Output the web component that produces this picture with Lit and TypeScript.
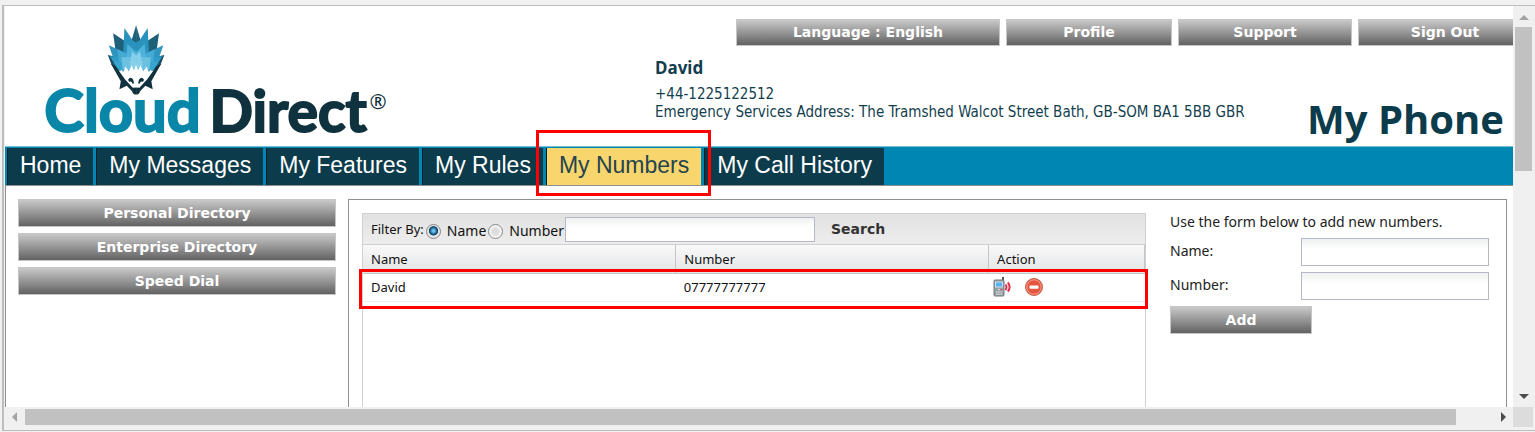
import { LitElement, html, svg, css } from "lit";
import { customElement, property, state } from "lit/decorators.js";

const FACE = "#10323f";

@customElement("brand-logo")
class BrandLogo extends LitElement {
  static styles = css`
    :host { display: block; }
    svg { display: block; width: 343px; height: 113px; overflow: visible; }
    .word { font: 700 172px Lato, "Open Sans", sans-serif; stroke-width: 6; }
    .cloud { fill: #0a86a8; stroke: #0a86a8; font-size: 180px; }
    .direct { fill: #10323f; stroke: #10323f; }
    .mark { font: 400 62px "Noto Sans", sans-serif; fill: #10323f; }
  `;
  render() {
    const spikes = (side: string) => svg`
      <g transform=${side}>
        <path fill="#1d6078" d="M0 0 L-15 50 L-10 90 L0 90 Z"/>
        <path fill="#1d6078" d="M-69 24 L-60 90 L-20 110 L-36 46 Z"/>
        <path fill="#17495c" d="M-85 89 L-72 122 L-40 140 L-40 100 Z"/>
        <path fill="#1d6078" d="M-75 115 L-52 136 L-30 140 L-50 112 Z"/>
        <path fill="#2a93bd" d="M-35 8 L-39 90 L0 120 L0 52 L-10 46 Z"/>
        <path fill="#2f94bf" d="M-82 60 L-64 112 L-20 140 L-30 84 Z"/>
        <path fill="#2d9cc6" d="M-80 92 L-56 130 L-10 145 L-34 100 Z"/>
        <path fill="#43acd4" d="M-56 72 L-50 124 L-10 140 L-14 92 Z"/>
        <path fill="#4fb2da" d="M-26 56 L-30 110 L0 136 L0 80 Z"/>
        <path fill="#3aa6d0" d="M-68 108 L-50 136 L-20 140 L-30 112 Z"/>
        <path fill="#6cc1e3" d="M-44 96 L-40 134 L0 136 L-14 96 Z"/>
        <path fill="#86cfeb" d="M-12 78 L-20 120 L0 134 L0 90 Z"/>
        <path fill="#ffffff" d="M-54 144 L-44 134 L-38 142 L-32 124 L-22 138 L-13 120 L-6 136 L0 118 L0 198 L-18 182 L-44 158 Z"/>
        <path fill=${FACE} d="M-76 115 L-62 122 L-33 163 L-10 188 L0 187 L0 208 Q-9 209 -12 198 L-28 182 L-50 192 L-46 168 Z"/>
        <path fill=${FACE} d="M-24 164 Q-17 152 -9 163 L-6 174 L-11 176 Q-13 166 -21 170 Z"/>
      </g>`;
    return html`
      <svg viewBox="135 72 1030 340" role="img" aria-label="Cloud Direct">
        ${spikes("translate(408 76)")}
        ${spikes("translate(408 76) scale(-1 1)")}
        <text class="word cloud" x="132" y="397">Cloud</text>
        <text class="word direct" x="629" y="397">Direct</text>
        <text class="mark" x="1110" y="329">®</text>
      </svg>`;
  }
}

@customElement("scroll-track")
class ScrollTrack extends LitElement {
  @property({ reflect: true }) direction = "vertical";
  static styles = css`
    :host { display: flex; background: #f0f0f0; }
    :host([direction="vertical"]) { flex-direction: column; }
    .arrow { display: flex; align-items: center; justify-content: center; flex: none; }
    :host([direction="vertical"]) .arrow { height: 21px; }
    :host([direction="horizontal"]) .arrow { width: 20px; }
    .thumb { background: #c1c1c1; }
    :host([direction="vertical"]) .thumb { height: 36%; margin: 0 3px 0 2px; }
    :host([direction="horizontal"]) .thumb { flex: 39; margin: 2px 0; }
    .rest { flex: 1; }
    svg { width: 10px; height: 10px; display: block; }
  `;
  render() {
    const v = this.direction === "vertical";
    return html`
      <div class="arrow"><svg viewBox="0 0 10 10"><path fill="#a3a3a3" d=${v ? "M0 8 L5 3 L10 8Z" : "M7 0 L2 5 L7 10Z"} /></svg></div>
      <div class="thumb"></div>
      <div class="rest"></div>
      <div class="arrow"><svg viewBox="0 0 10 10"><path fill="#4c4c4c" d=${v ? "M0 2 L5 7 L10 2Z" : "M3 0 L8 5 L3 10Z"} /></svg></div>`;
  }
}

@customElement("app-root")
class AppRoot extends LitElement {
  @state() private filter = "name";

  private tools = [
    { label: "Language : English", size: "wide" },
    { label: "Profile", size: "narrow" },
    { label: "Support", size: "" },
    { label: "Sign Out", size: "" },
  ];
  private tabs = ["Home", "My Messages", "My Features", "My Rules", "My Numbers", "My Call History"];
  private directories = ["Personal Directory", "Enterprise Directory", "Speed Dial"];
  private contacts = [{ name: "David", number: "07777777777" }];

  static styles = css`
    :host { display: block; font: 13px/20px "Noto Sans", sans-serif; color: #222; }
    * { box-sizing: border-box; }
    .window { height: 100vh; display: flex; flex-direction: column; background: #f1f1f1; padding: 5px 0 1px 2px; overflow: hidden; }
    .frame { flex: 1; min-height: 0; display: grid; grid-template: minmax(0, 1fr) 20px / minmax(0, 1fr) 22px; border: solid #bdbdbd; border-width: 1px 0 1px 2px; padding: 0 0 3px 1px; }
    .corner { background: #dcdcdc; margin-right: 2px; }
    .page { background: #fff; overflow: hidden; display: flex; flex-direction: column; }

    .header { display: flex; justify-content: space-between; height: 140px; flex: none; }
    .logo { margin: 18px 0 0 40px; }
    .side { width: 858px; display: flex; flex-direction: column; }
    .tools { display: flex; justify-content: flex-end; gap: 6px; margin: 13px -19px 0 0; }
    .pill { height: 28px; border: 1px solid #c6c6c6; background: linear-gradient(#c9c9c9, #626262); color: #fff; font: 700 14px/26px "DejaVu Sans", Verdana, sans-serif; padding: 0; cursor: pointer; display: block; text-align: center; text-decoration: none; }
    .tools .pill { width: 174px; height: 27px; flex: none; line-height: 25px; }
    .tools .wide { width: 264px; }
    .tools .narrow { width: 166px; }
    .account { display: flex; justify-content: space-between; color: #123e4e; }
    .who { font: 15px/18px "DejaVu Sans Condensed", "Noto Sans", sans-serif; }
    .who h2 { margin: 12px 0 7px; font: 700 17px/20px "Noto Sans", sans-serif; }
    .who p { margin: 0; }
    h1 { margin: 45px 9px 0 0; font: 700 40px/56px "Open Sans", "Noto Sans", sans-serif; color: #0c3b4b; white-space: nowrap; }

    .nav { display: flex; gap: 3px; flex: none; height: 40px; background: #0086b2; border-top: 1px solid #6fbfd8; border-bottom: 1px solid #8f8f8f; padding: 1px 0 0 2px; }
    .tab { border-left: 1px solid #04202b; background: #0c3b4b; color: #fff; font: 23px/34px "Liberation Sans", sans-serif; padding: 0 12px; text-decoration: none; white-space: nowrap; position: relative; }
    .tab.active { background: #f9d56e; color: #24454e; }
    .tab.active::after { content: ""; position: absolute; inset: -18px -10px -11px -11px; border: 3px solid #f00; z-index: 1; }

    .body { flex: 1; min-height: 0; display: flex; align-items: stretch; padding: 13px 6px 0 12px; border-left: 1px solid #8f8f8f; }
    .menu { width: 318px; flex: none; display: flex; flex-direction: column; gap: 6px; margin-right: 12px; }
    .panel { flex: 1; min-width: 0; border: solid #909090; border-width: 1px 1px 0 1px; display: flex; padding: 13px 17px 0 13px; }

    .grid { flex: 1; min-width: 0; border: 1px solid #d0d0d0; border-bottom: 0; font: 13px/18px "Noto Sans", sans-serif; color: #111; }
    .filter { display: flex; align-items: center; height: 31px; background: linear-gradient(#e2e2e2, #ededed); border-bottom: 1px solid #d0d0d0; padding-left: 8px; }
    .filter label { display: flex; align-items: center; gap: 6px; font-size: 14px; padding-top: 4px; }
    .filter input[type="radio"] { appearance: none; width: 15px; height: 15px; margin: 0 0 0 2px; border: 1px solid #868686; border-radius: 50%; background: radial-gradient(circle, #ddd 30%, #fafafa 70%); }
    .filter input[type="radio"]:checked { background: radial-gradient(circle at 50% 45%, #6fc4ee 0 10%, #12547f 38%, #12405f 44%, #e6e6e6 52%); }
    .text { border: 1px solid #b5b8c8; background: linear-gradient(#eef1f1, #fff 40%); padding: 0 4px; font: inherit; min-width: 0; }
    .filter .text { width: 250px; height: 25px; margin-left: 1px; }
    .search { border: 0; background: none; color: #333; padding: 0; margin-left: 16px; font: 700 14px/20px "DejaVu Sans", Verdana, sans-serif; }
    table { width: 100%; border-collapse: collapse; table-layout: fixed; }
    th, td { text-align: left; padding: 0 8px; font-weight: 400; }
    th { width: 40%; height: 28px; background: linear-gradient(#f9f9f9, #e3e4e6); border: solid #c5c5c5; border-width: 0 1px 1px 0; }
    th.act { width: 20%; }
    td { height: 28px; border-bottom: 1px solid #ededed; }
    tbody tr { position: relative; }
    tbody tr::after { content: ""; position: absolute; inset: -4px -3px -8px -4px; border: 3px solid #f00; pointer-events: none; }
    .actions { display: flex; gap: 12px; padding-left: 3px; margin-left: -8px; }
    .icon { border: 0; background: none; padding: 0; width: 20px; height: 20px; }
    .icon svg { display: block; width: 20px; height: 20px; }

    form { width: 319px; flex: none; margin-left: 24px; font: 14px/18px "Noto Sans", sans-serif; }
    form p { margin: 0 0 7px; }
    .field { display: flex; justify-content: space-between; height: 28px; margin-bottom: 6px; }
    .field label { line-height: 26px; }
    .field .text { width: 188px; }
    form .pill { width: 142px; }
  `;

  private handset() {
    return html`<svg viewBox="0 0 20 20">
      <rect x="10" y="0" width="2" height="7" fill="#555"/>
      <rect x="2" y="3" width="10" height="16" rx="1" fill="#9aa1a8" stroke="#70767d"/>
      <rect x="3.500" y="5" width="7" height="5" fill="#58b3f5" stroke="#eaf5ff" stroke-width=".7"/>
      <path d="M4 12.500h1.600M6.200 12.500h1.600M4 15h1.600M6.200 15h1.600M8.500 15h1.600M4 17.300h1.600M6.200 17.300h1.600M8.500 17.300h1.600" stroke="#e8e8e8" stroke-width="1.100"/>
      <path d="M4 12.500h1.600" stroke="#55b35a" stroke-width="1.200"/><path d="M8.500 12.500h1.600" stroke="#e8485c" stroke-width="1.200"/>
      <path d="M13.500 7.500Q15.500 10 13.500 13M15.800 5.500Q19.500 10 15.800 14.500" fill="none" stroke="#e0304e" stroke-width="2"/>
    </svg>`;
  }

  private remove() {
    return html`<svg viewBox="0 0 20 20">
      <circle cx="10" cy="10" r="8.500" fill="#e4563f" stroke="#c7604e"/>
      <circle cx="10" cy="10" r="7.200" fill="none" stroke="#f5a191" stroke-width="1"/>
      <rect x="5.500" y="8.500" width="9" height="3.200" rx=".6" fill="#fff"/>
    </svg>`;
  }

  render() {
    return html`
      <div class="window">
        <div class="frame">
          <div class="page">
            <header class="header">
              <brand-logo class="logo"></brand-logo>
              <div class="side">
                <div class="tools">
                  ${this.tools.map((t) => html`<button class="pill ${t.size}">${t.label}</button>`)}
                </div>
                <div class="account">
                  <div class="who">
                    <h2>David</h2>
                    <p>+44-1225122512</p>
                    <p>Emergency Services Address: The Tramshed Walcot Street Bath, GB-SOM BA1 5BB GBR</p>
                  </div>
                  <h1>My Phone</h1>
                </div>
              </div>
            </header>
            <nav class="nav">
              ${this.tabs.map((t) => html`<a href="#" class="tab ${t === "My Numbers" ? "active" : ""}">${t}</a>`)}
            </nav>
            <main class="body">
              <div class="menu">
                ${this.directories.map((d) => html`<a href="#" class="pill">${d}</a>`)}
              </div>
              <section class="panel">
                <div class="grid">
                  <div class="filter">
                    <span>Filter By:</span>
                    <label><input type="radio" name="by" .checked=${this.filter === "name"} @change=${() => (this.filter = "name")} />Name</label>
                    <label><input type="radio" name="by" .checked=${this.filter === "number"} @change=${() => (this.filter = "number")} />Number</label>
                    <input class="text" type="text" aria-label="Filter" />
                    <button class="search">Search</button>
                  </div>
                  <table>
                    <thead><tr><th>Name</th><th>Number</th><th class="act">Action</th></tr></thead>
                    <tbody>
                      ${this.contacts.map((c) => html`
                        <tr>
                          <td>${c.name}</td>
                          <td>${c.number}</td>
                          <td><div class="actions">
                            <button class="icon" aria-label="Call">${this.handset()}</button>
                            <button class="icon" aria-label="Remove">${this.remove()}</button>
                          </div></td>
                        </tr>`)}
                    </tbody>
                  </table>
                </div>
                <form @submit=${(e: Event) => e.preventDefault()}>
                  <p>Use the form below to add new numbers.</p>
                  <div class="field"><label for="name">Name:</label><input class="text" id="name" type="text" /></div>
                  <div class="field"><label for="number">Number:</label><input class="text" id="number" type="text" /></div>
                  <button class="pill">Add</button>
                </form>
              </section>
            </main>
          </div>
          <scroll-track direction="vertical"></scroll-track>
          <scroll-track direction="horizontal"></scroll-track>
          <div class="corner"></div>
        </div>
      </div>`;
  }
}
